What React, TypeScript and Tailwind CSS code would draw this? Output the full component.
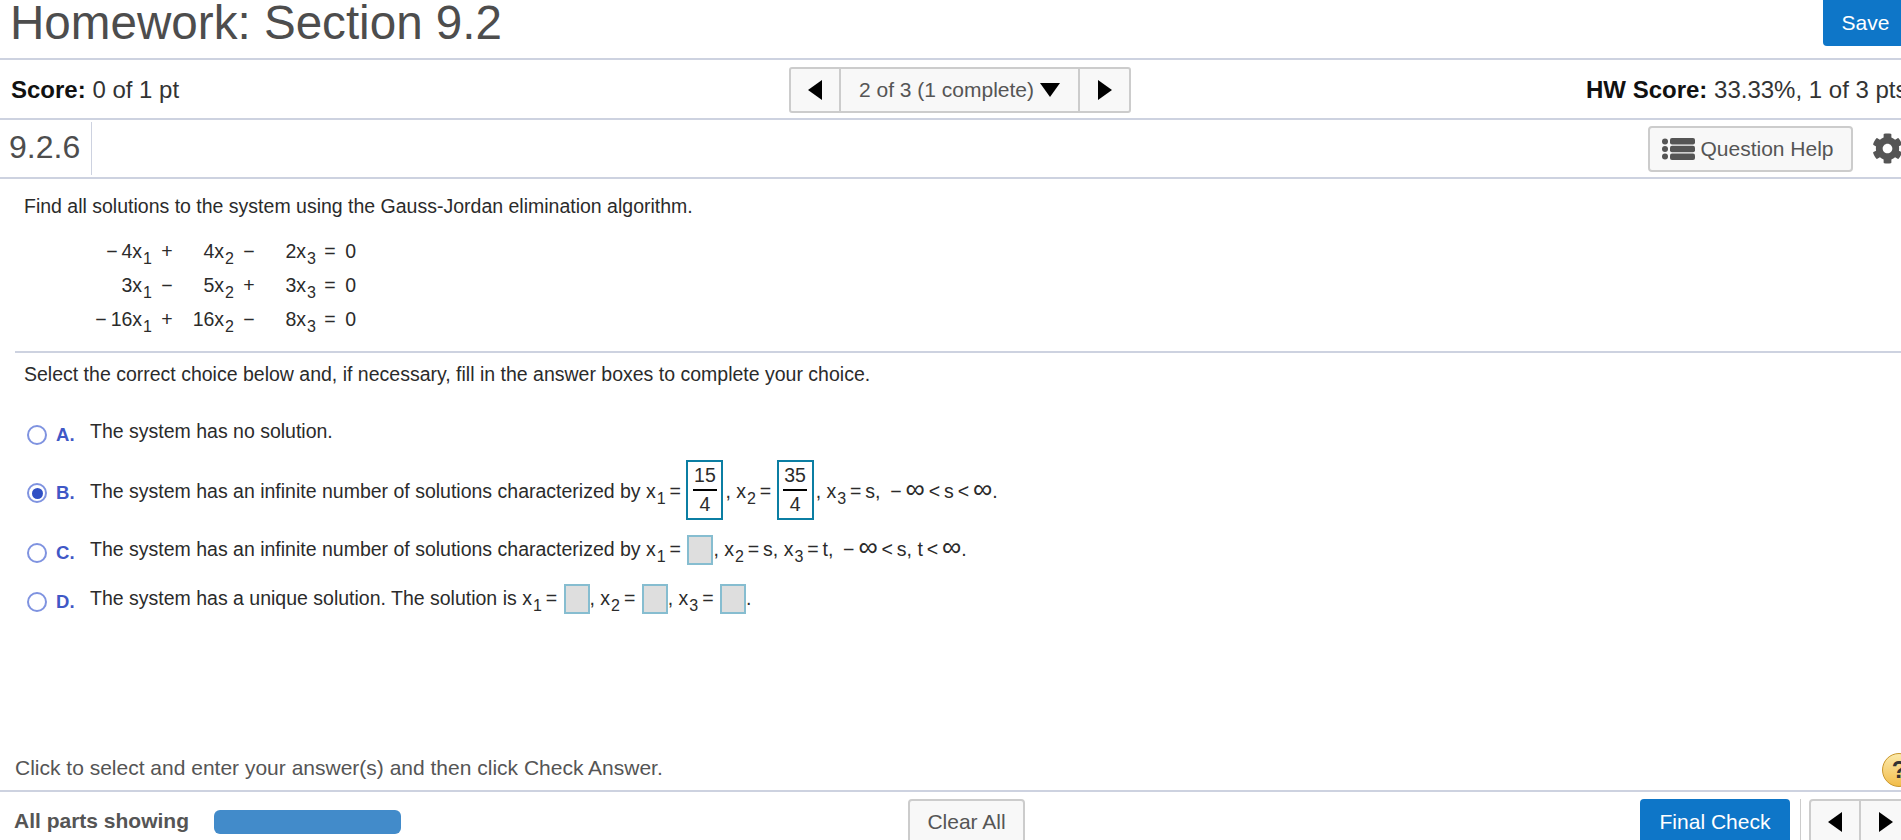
import { FaCog } from 'react-icons/fa';

function Tri({ dir, className = '' }: { dir: 'left' | 'right' | 'down'; className?: string }) {
  const pts = dir === 'left' ? '14,0 14,20 0,10' : dir === 'right' ? '0,0 14,10 0,20' : '0,0 20,0 10,14';
  const w = dir === 'down' ? 20 : 14;
  const h = dir === 'down' ? 14 : 20;
  return (
    <svg width={w} height={h} viewBox={`0 0 ${w} ${h}`} className={className}>
      <polygon points={pts} fill="#000" />
    </svg>
  );
}

function ListIcon() {
  return (
    <svg width="33" height="22" viewBox="0 0 33 22" fill="#555">
      <circle cx="3" cy="3.5" r="3" />
      <circle cx="3" cy="11" r="3" />
      <circle cx="3" cy="18.5" r="3" />
      <rect x="8" y="0" width="25" height="6.5" rx="2" />
      <rect x="8" y="7.8" width="25" height="6.5" rx="2" />
      <rect x="8" y="15.5" width="25" height="6.5" rx="2" />
    </svg>
  );
}

function Radio({ checked = false }: { checked?: boolean }) {
  return (
    <span className="flex h-[20px] w-[20px] shrink-0 items-center justify-center rounded-full border-2 border-[#7f93e0] bg-white">
      {checked && <span className="h-[11px] w-[11px] rounded-full bg-[#2f4fc4]" />}
    </span>
  );
}

function X({ n }: { n: number }) {
  return (
    <span>
      x<sub className="bottom-[-6px] ml-[1px] text-[16px]">{n}</sub>
    </span>
  );
}

function Inf() {
  return <span className="text-[27px] leading-[20px]">∞</span>;
}

function Frac({ top }: { top: string }) {
  return (
    <span className="mr-[2px] inline-flex h-[60px] w-[37px] flex-col items-center justify-center border-2 border-[#0b7ea3] align-[16px] leading-[25px]">
      <span>{top}</span>
      <span className="my-[1px] h-[2px] w-[24px] bg-black" />
      <span>4</span>
    </span>
  );
}

function Blank() {
  return <span className="ml-[1px] inline-block h-[30px] w-[26px] border-2 border-[#86bdd0] bg-[#dedede] align-middle" />;
}

function Choice({ letter, h, checked, children }: { letter: string; h: string; checked?: boolean; children: React.ReactNode }) {
  return (
    <div className={`flex items-center pl-[27px] ${h}`}>
      <span className="mt-[6px] flex items-center">
        <Radio checked={checked} />
        <span className="ml-[9px] w-[34px] text-[18.5px] font-bold text-[#3f58c6]">{letter}.</span>
      </span>
      <span className="whitespace-nowrap">{children}</span>
    </div>
  );
}

const rows = [
  ['−\u20094', '+', '4', '−', '2'],
  ['3', '−', '5', '+', '3'],
  ['−\u200916', '+', '16', '−', '8'],
];

export default function App() {
  return (
    <div className="flex h-[840px] w-[1901px] flex-col overflow-hidden bg-white font-['Liberation_Sans',sans-serif] text-[19.5px] text-[#2b2b2b]">
      <div className="w-[1912px]">
        <div className="flex h-[60px] items-start justify-between border-b-2 border-[#cdd2e0] pl-[10px]">
          <h1 className="text-[47.6px] leading-[46px] text-[#4d4d4d]">Homework: Section 9.2</h1>
          <button className="h-[46px] w-[89px] rounded-b-[4px] bg-[#0e76c8] pr-[4px] text-[21px] text-white">Save</button>
        </div>

        <div className="flex h-[60px] items-center border-b-2 border-[#cdd2e0] pl-[11px] pt-[2px] text-[24px]">
          <div className="w-[400px]">
            <b className="text-[#111]">Score:</b> <span className="text-[#333]">0 of 1 pt</span>
          </div>
          <div className="ml-[378px] flex h-[46px] items-stretch rounded-[3px] border-2 border-[#ccc] bg-[#f8f8f8] text-[21px] text-[#555]">
            <div className="flex w-[50px] items-center justify-center border-r-2 border-[#ccc]">
              <Tri dir="left" />
            </div>
            <div className="flex w-[239px] items-center justify-center gap-[6px] border-r-2 border-[#ccc]">
              2 of 3 (1 complete)
              <Tri dir="down" />
            </div>
            <div className="flex w-[49px] items-center justify-center">
              <Tri dir="right" />
            </div>
          </div>
          <div className="ml-auto w-[326px] whitespace-nowrap">
            <b className="text-[#111]">HW Score:</b> <span className="text-[#333]">33.33%, 1 of 3 pts</span>
          </div>
        </div>

        <div className="flex h-[59px] items-center border-b-2 border-[#cdd2e0] pl-[9px]">
          <div className="flex h-[53px] w-[83px] items-center border-r border-[#cdd2e0] pb-[4px] text-[32px] text-[#4d4d4d]">9.2.6</div>
          <button className="ml-auto flex h-[46px] w-[205px] items-center justify-center gap-[5px] rounded-[4px] border-2 border-[#ccc] bg-[#f8f8f8] pr-[5px] text-[21px] text-[#555]">
            <ListIcon />
            Question Help
          </button>
          <div className="ml-[19px] mr-[9px] text-[#555]">
            <FaCog size={31} />
          </div>
        </div>
      </div>

      <p className="mt-[15px] pl-[24px] leading-[24px]">Find all solutions to the system using the Gauss-Jordan elimination algorithm.</p>

      <div className="mt-[16px] ml-[92px] grid w-[264px] grid-cols-[60px_30px_52px_30px_52px_28px_12px] leading-[34px]">
        {rows.map((r, i) => (
          <div key={i} className="contents">
            <span className="text-right whitespace-nowrap">{r[0]}<X n={1} /></span>
            <span className="text-center">{r[1]}</span>
            <span className="text-right">{r[2]}<X n={2} /></span>
            <span className="text-center">{r[3]}</span>
            <span className="text-right">{r[4]}<X n={3} /></span>
            <span className="text-center">=</span>
            <span className="text-right">0</span>
          </div>
        ))}
      </div>

      <div className="mt-[15px] ml-[15px] border-t-2 border-[#cdd2e0]" />
      <p className="mt-[9px] pl-[24px] leading-[24px]">Select the correct choice below and, if necessary, fill in the answer boxes to complete your choice.</p>

      <div className="mt-[27px]">
        <Choice letter="A" h="h-[37px]">The system has no solution.</Choice>
        <Choice letter="B" h="h-[80px]" checked>
          The system has an infinite number of solutions characterized by <X n={1} />&thinsp;= <Frac top="15" />, <X n={2} />&thinsp;= <Frac top="35" />, <X n={3} />&thinsp;=&thinsp;s,&ensp;−&thinsp;<Inf />&thinsp;&lt;&thinsp;s&thinsp;&lt;&thinsp;<Inf />.
        </Choice>
        <Choice letter="C" h="h-[40px]">
          The system has an infinite number of solutions characterized by <X n={1} />&thinsp;= <Blank />, <X n={2} />&thinsp;=&thinsp;s, <X n={3} />&thinsp;=&thinsp;t,&ensp;−&thinsp;<Inf />&thinsp;&lt;&thinsp;s, t&thinsp;&lt;&thinsp;<Inf />.
        </Choice>
        <Choice letter="D" h="h-[58px]">
          The system has a unique solution. The solution is <X n={1} />&thinsp;= <Blank />, <X n={2} />&thinsp;= <Blank />, <X n={3} />&thinsp;= <Blank />.
        </Choice>
      </div>

      <div className="mt-auto w-[1916px]">
        <div className="flex h-[40px] items-center justify-between pl-[15px] text-[21px] text-[#555]">
          <span className="pb-[4px]">Click to select and enter your answer(s) and then click Check Answer.</span>
          <span className="flex h-[34px] w-[34px] items-center justify-center rounded-full border border-[#c9962b] bg-gradient-to-b from-[#fbe9a8] to-[#f2bd47] text-[24px] font-bold text-[#333]">?</span>
        </div>
        <div className="flex h-[50px] border-t-2 border-[#cdd2e0] pl-[14px] text-[21px] text-[#555]">
          <b className="mt-[17px] w-[200px] leading-[24px]">All parts showing</b>
          <div className="mt-[18px] h-[24px] w-[187px] rounded-[6px] bg-[#428bca]" />
          <button className="ml-[507px] mt-[7px] h-[50px] w-[117px] rounded-t-[4px] border-2 border-[#ccc] bg-[#f8f8f8] pb-[4px]">Clear All</button>
          <button className="ml-[615px] mt-[7px] h-[50px] w-[150px] rounded-t-[4px] bg-[#0e76c8] pb-[4px] text-white">Final Check</button>
          <div className="ml-[10px] mt-[7px] h-[50px] w-[1px] bg-[#ccc]" />
          <div className="ml-[8px] mt-[7px] flex h-[50px] rounded-t-[4px] border-2 border-[#ccc] bg-[#f8f8f8] pb-[4px]">
            <div className="flex w-[50px] items-center justify-center border-r-2 border-[#ccc]">
              <Tri dir="left" />
            </div>
            <div className="flex w-[50px] items-center justify-center">
              <Tri dir="right" />
            </div>
          </div>
        </div>
      </div>
    </div>
  );
}
